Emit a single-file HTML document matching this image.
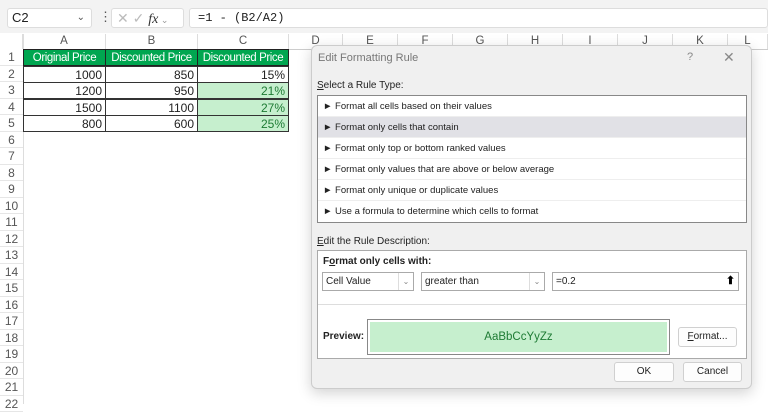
<!DOCTYPE html>
<html><head><style>
*{margin:0;padding:0;box-sizing:border-box}
body{width:768px;height:404px;overflow:hidden;background:#fff;font-family:"Liberation Sans",sans-serif;position:relative;font-size:12px;color:#222}
.a{position:absolute}
.rh{position:absolute;left:0;width:23px;text-align:center;color:#555;font-size:12px;background:#fff;border-bottom:1px solid #e6e6e6}
.ch{position:absolute;top:34px;height:15px;text-align:center;color:#555;font-size:11.5px;line-height:15px;border-right:1px solid #ddd;background:#fff}
.c{position:absolute;height:17px;line-height:17px;font-size:12px;padding-right:3px;text-align:right;border:1px solid #333;margin:-1px 0 0 -1px;white-space:nowrap;overflow:hidden}
.hd{background:#00a650;color:#fff;text-align:center;padding:0;border-color:#222;font-size:11.5px;letter-spacing:-0.4px}
.g{background:#c6efce;color:#1e7b34}
.it{position:absolute;left:0;right:0;height:21px;line-height:21px;padding-left:5px;font-size:9.5px;color:#222;border-bottom:1px solid #eee}
.btn{position:absolute;background:#fdfdfd;border:1px solid #d0d0d0;border-radius:3px;text-align:center;font-size:10px;line-height:18px}
.cb{position:absolute;top:272px;height:19px;border:1px solid #aaa;background:#fff;font-size:10px;line-height:17px;padding-left:3px}
.dd{position:absolute;right:0;top:0;width:15px;height:17px;border-left:1px solid #ddd;color:#888;font-size:8px;text-align:center}
</style></head><body>
<div class="a" style="left:0;top:0;width:768px;height:33px;background:#f3f3f3"></div>
<div class="a" style="left:7px;top:8px;width:85px;height:20px;background:#fff;border:1px solid #ddd;border-radius:3px;font-size:13px;line-height:18px;padding-left:4px">C2<span style="position:absolute;right:6px;color:#555;font-size:10px">&#8964;</span></div>
<div class="a" style="left:99px;top:9px;color:#555;font-size:13px">&#8942;</div>
<div class="a" style="left:111px;top:8px;width:73px;height:20px;background:#fff;border:1px solid #ddd;border-radius:3px;color:#bbb;font-size:14px;line-height:18px;padding-left:5px">✕ ✓ <i style="font-family:'Liberation Serif',serif;color:#333">fx</i><span style="font-size:9px;color:#999"> &#8964;</span></div>
<div class="a" style="left:189px;top:8px;width:579px;height:20px;background:#fff;border:1px solid #ddd;border-radius:3px;font-family:'Liberation Mono',monospace;font-size:12px;line-height:18px;padding-left:8px">=1 - (B2/A2)</div>
<div class="a" style="left:0;top:34px;width:23px;height:15px;background:#fff;border-right:1px solid #ddd"></div>
<div class="ch" style="left:23px;width:83px">A</div>
<div class="ch" style="left:106px;width:92px">B</div>
<div class="ch" style="left:198px;width:91px">C</div>
<div class="ch" style="left:289px;width:54px">D</div>
<div class="ch" style="left:343px;width:55px">E</div>
<div class="ch" style="left:398px;width:55px">F</div>
<div class="ch" style="left:453px;width:55px">G</div>
<div class="ch" style="left:508px;width:55px">H</div>
<div class="ch" style="left:563px;width:55px">I</div>
<div class="ch" style="left:618px;width:55px">J</div>
<div class="ch" style="left:673px;width:55px">K</div>
<div class="ch" style="left:728px;width:40px">L</div>
<div class="a" style="left:0;top:49px;width:768px;height:1px;background:#ccc"></div>
<div class="a" style="left:23px;top:34px;width:1px;height:370px;background:#ddd"></div>
<div id="rows"></div>
<script>
var h='';for(var i=1;i<=22;i++){var t=49+(i-1)*16.5;h+='<div class="rh" style="top:'+t+'px;height:16.5px;line-height:16.5px">'+i+'</div>';}
document.getElementById('rows').innerHTML=h;
</script>
<div class="c hd" style="left:24px;top:50px;width:83px">Original Price</div>
<div class="c hd" style="left:106px;top:50px;width:93px">Discounted Price</div>
<div class="c hd" style="left:198px;top:50px;width:92px">Discounted Price</div>
<div class="c" style="left:24px;top:67px;width:83px">1000</div><div class="c" style="left:106px;top:67px;width:93px">850</div><div class="c" style="left:198px;top:67px;width:92px">15%</div>
<div class="c" style="left:24px;top:83px;width:83px">1200</div><div class="c" style="left:106px;top:83px;width:93px">950</div><div class="c g" style="left:198px;top:83px;width:92px">21%</div>
<div class="c" style="left:24px;top:100px;width:83px">1500</div><div class="c" style="left:106px;top:100px;width:93px">1100</div><div class="c g" style="left:198px;top:100px;width:92px">27%</div>
<div class="c" style="left:24px;top:116px;width:83px">800</div><div class="c" style="left:106px;top:116px;width:93px">600</div><div class="c g" style="left:198px;top:116px;width:92px">25%</div>

<div class="a" style="left:311px;top:45px;width:441px;height:344px;background:#f0f0f0;border:1px solid #ccc;border-radius:6px;box-shadow:0 4px 14px rgba(0,0,0,.18)"></div>
<div class="a" style="left:318px;top:52px;font-size:11px;color:#777">Edit Formatting Rule</div>
<div class="a" style="left:687px;top:51px;font-size:11px;color:#888">?</div>
<div class="a" style="left:723px;top:49px;font-size:14px;color:#888">✕</div>
<div class="a" style="left:317px;top:80px;font-size:10px"><u>S</u>elect a Rule Type:</div>
<div class="a" style="left:317px;top:95px;width:430px;height:128px;background:#fff;border:1px solid #888">
<div class="it" style="top:0">► Format all cells based on their values</div>
<div class="it" style="top:21px;background:#e1e1e6">► Format only cells that contain</div>
<div class="it" style="top:42px">► Format only top or bottom ranked values</div>
<div class="it" style="top:63px">► Format only values that are above or below average</div>
<div class="it" style="top:84px">► Format only unique or duplicate values</div>
<div class="it" style="top:105px;border:none">► Use a formula to determine which cells to format</div>
</div>
<div class="a" style="left:317px;top:236px;font-size:10px"><u>E</u>dit the Rule Description:</div>
<div class="a" style="left:317px;top:250px;width:430px;height:109px;background:#fff;border:1px solid #aaa"></div>
<div class="a" style="left:323px;top:256px;font-size:10px;font-weight:bold">F<u>o</u>rmat only cells with:</div>
<div class="cb" style="left:322px;width:92px">Cell Value<div class="dd">&#8964;</div></div>
<div class="cb" style="left:421px;width:124px">greater than<div class="dd">&#8964;</div></div>
<div class="cb" style="left:552px;width:187px">=0.2<div class="dd" style="color:#000;font-size:11px;font-weight:bold;border:none">⬆</div></div>
<div class="a" style="left:318px;top:304px;width:428px;height:1px;background:#ddd"></div>
<div class="a" style="left:323px;top:331px;font-size:10px;font-weight:bold">Preview:</div>
<div class="a" style="left:367px;top:319px;width:303px;height:36px;background:#c6efce;border:1px solid #888;outline:2px solid #fff;outline-offset:-3px;text-align:center;line-height:34px;color:#1e7b34;font-size:11.5px">AaBbCcYyZz</div>
<div class="btn" style="left:678px;top:327px;width:59px;height:20px"><u>F</u>ormat...</div>
<div class="btn" style="left:614px;top:362px;width:60px;height:20px">OK</div>
<div class="btn" style="left:683px;top:362px;width:59px;height:20px">Cancel</div>
</body></html>
